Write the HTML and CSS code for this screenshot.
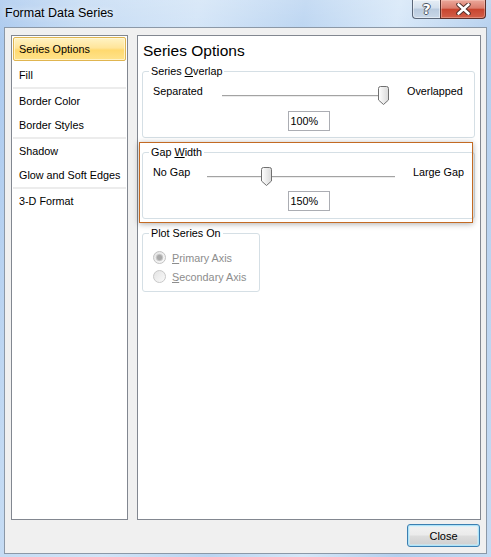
FILE: index.html
```html
<!DOCTYPE html>
<html lang="en">
<head>
<meta charset="utf-8">
<title>Format Data Series</title>
<link rel="stylesheet" href="styles.css">
</head>
<body>
<div class="window">
  <header class="titlebar">
    <span class="title">Format Data Series</span>
    <div class="caption-buttons">
      <div class="cap-btn cap-help"><span class="cap-glyph">?</span></div>
      <div class="cap-btn cap-close">
        <svg width="15" height="12" viewBox="0 0 15 12">
          <path d="M2.5 1.5 L12.5 10.5 M12.5 1.5 L2.5 10.5" stroke="#4a2a26" stroke-width="4.4" stroke-linecap="round" fill="none"/>
          <path d="M2.5 1.5 L12.5 10.5 M12.5 1.5 L2.5 10.5" stroke="#ffffff" stroke-width="2.6" stroke-linecap="round" fill="none"/>
        </svg>
      </div>
    </div>
  </header>

  <div class="client">
    <div class="panes">
      <ul class="nav">
        <li class="nav-item selected">Series Options</li>
        <li class="nav-sep blank"></li>
        <li class="nav-item">Fill</li>
        <li class="nav-sep"></li>
        <li class="nav-item">Border Color</li>
        <li class="nav-item">Border Styles</li>
        <li class="nav-sep"></li>
        <li class="nav-item">Shadow</li>
        <li class="nav-item">Glow and Soft Edges</li>
        <li class="nav-sep"></li>
        <li class="nav-item">3-D Format</li>
      </ul>

      <section class="page">
        <h1 class="page-title">Series Options</h1>

        <fieldset class="group overlap">
          <legend>Series <u>O</u>verlap</legend>
          <div class="slider-row">
            <span class="lbl lbl-start">Separated</span>
            <div class="slider">
              <svg class="thumb" style="left:156px" width="11" height="19" viewBox="0 0 11 19">
                <defs><linearGradient id="thumbA" x1="0" x2="1"><stop offset="0" stop-color="#ffffff"/><stop offset="1" stop-color="#d9d9d9"/></linearGradient></defs>
                <path d="M0.5 2.5 Q0.5 0.5 2.5 0.5 H8.5 Q10.5 0.5 10.5 2.5 V14 L5.5 18.5 L0.5 14 Z" fill="url(#thumbA)" stroke="#707070"/>
              </svg>
            </div>
            <span class="lbl lbl-end">Overlapped</span>
          </div>
          <div class="value-box">100%</div>
        </fieldset>

        <div class="highlight">
          <fieldset class="group gap">
            <legend>Gap <u>W</u>idth</legend>
            <div class="slider-row">
              <span class="lbl lbl-start">No Gap</span>
              <div class="slider">
                <svg class="thumb" style="left:54px" width="11" height="19" viewBox="0 0 11 19">
                  <defs><linearGradient id="thumbB" x1="0" x2="1"><stop offset="0" stop-color="#ffffff"/><stop offset="1" stop-color="#d9d9d9"/></linearGradient></defs>
                  <path d="M0.5 2.5 Q0.5 0.5 2.5 0.5 H8.5 Q10.5 0.5 10.5 2.5 V14 L5.5 18.5 L0.5 14 Z" fill="url(#thumbB)" stroke="#707070"/>
                </svg>
              </div>
              <span class="lbl lbl-end">Large Gap</span>
            </div>
            <div class="value-box">150%</div>
          </fieldset>
        </div>

        <fieldset class="group plot">
          <legend>Plot Series On</legend>
          <div class="radio-row">
            <svg class="radio" width="13" height="13" viewBox="0 0 13 13">
              <defs><linearGradient id="radA" x1="0" y1="0" x2="1" y2="1"><stop offset="0" stop-color="#e2e2e2"/><stop offset="1" stop-color="#fbfbfb"/></linearGradient></defs>
              <circle cx="6.5" cy="6.5" r="6" fill="url(#radA)" stroke="#c2c2c2"/>
              <circle cx="6.5" cy="6.5" r="3.2" fill="#a9a9a9" stroke="#c9c9c9"/>
            </svg>
            <span class="radio-label"><u>P</u>rimary Axis</span>
          </div>
          <div class="radio-row">
            <svg class="radio" width="13" height="13" viewBox="0 0 13 13">
              <defs><linearGradient id="radB" x1="0" y1="0" x2="1" y2="1"><stop offset="0" stop-color="#e2e2e2"/><stop offset="1" stop-color="#fbfbfb"/></linearGradient></defs>
              <circle cx="6.5" cy="6.5" r="6" fill="url(#radB)" stroke="#c8c8c8"/>
            </svg>
            <span class="radio-label"><u>S</u>econdary Axis</span>
          </div>
        </fieldset>
      </section>
    </div>

    <div class="button-row">
      <button class="btn default" type="button">Close</button>
    </div>
  </div>
</div>
</body>
</html>
```

FILE: styles.css
```css
* {
  box-sizing: border-box;
}

html,
body {
  margin: 0;
  padding: 0;
}

body {
  width: 491px;
  height: 557px;
  overflow: hidden;
  font-family: "Liberation Sans", Arial, sans-serif;
  font-size: 10.8px;
  color: #000;
  background:
    linear-gradient(180deg, rgba(255, 255, 255, 0.18) 0%, rgba(255, 255, 255, 0) 40px),
    linear-gradient(100deg, #a9c8ee 0%, #c3daf3 14%, #d2e4f7 34%, #bad4f1 52%, #d6e7f8 68%, #b4cfee 84%, #c5dbf3 100%);
}

.window {
  display: flex;
  flex-direction: column;
  height: 557px;
}

/* ---- title bar ---- */
.titlebar {
  height: 27px;
  display: flex;
  justify-content: space-between;
  align-items: flex-start;
  padding: 0 5px 0 5px;
}

.title {
  font-size: 12.5px;
  line-height: 26px;
  color: #000;
  text-shadow: 0 0 6px rgba(255, 255, 255, 0.9);
}

.caption-buttons {
  display: flex;
  height: 19px;
}

.cap-btn {
  height: 19px;
  display: flex;
  align-items: center;
  justify-content: center;
  border: 1px solid #5b6779;
  border-top: none;
}

.cap-help {
  width: 28px;
  border-right: none;
  border-radius: 0 0 0 4px;
  background: linear-gradient(180deg, #e6eef6 0%, #d3dfec 45%, #b9cade 50%, #c9d8e8 100%);
  box-shadow: inset 0 0 0 1px rgba(255, 255, 255, 0.45);
}

.cap-glyph {
  font-family: "DejaVu Sans", sans-serif;
  font-weight: bold;
  font-size: 14px;
  line-height: 17px;
  color: #fff;
  text-shadow: 1px 0 0 #4b5563, -1px 0 0 #4b5563, 0 1px 0 #4b5563, 0 -1px 0 #4b5563;
}

.cap-close {
  width: 46px;
  border-color: #5c2f2a;
  border-radius: 0 0 4px 0;
  background: linear-gradient(180deg, #eba89b 0%, #db7d6d 45%, #c8452f 52%, #d2604a 100%);
  box-shadow: inset 0 0 0 1px rgba(255, 220, 210, 0.35);
}

/* ---- client area ---- */
.client {
  flex: 1;
  margin: 0 4px 3px 4px;
  border: 1px solid #8b98a7;
  background: #f0f0f0;
  padding: 7px 5px 6px 6px;
  display: flex;
  flex-direction: column;
}

.panes {
  display: flex;
  gap: 9px;
  height: 485px;
}

/* ---- category list ---- */
.nav {
  width: 117px;
  margin: 0;
  padding: 1px 1px 0 1px;
  list-style: none;
  background: #fff;
  border: 1px solid #828790;
}

.nav-item {
  height: 24px;
  line-height: 22px;
  padding-left: 5px;
  border: 1px solid transparent;
  border-radius: 2px;
  white-space: nowrap;
}

.nav-item.selected {
  border-color: #e0b550;
  background: linear-gradient(180deg, #fff3c4 0%, #ffe59a 45%, #ffd96f 55%, #ffe38c 100%);
  box-shadow: inset 0 0 0 1px rgba(255, 250, 225, 0.7);
}

.nav-sep {
  height: 2px;
  background: #ececec;
}

.nav-sep.blank {
  background: transparent;
}

/* ---- options page ---- */
.page {
  flex: 1;
  background: #fff;
  border: 1px solid #828790;
  padding: 5px 5px 0 4px;
}

.page-title {
  margin: 0 0 0 1px;
  font-size: 15.5px;
  font-weight: normal;
  line-height: 20px;
}

.group {
  margin: 3px 0 0 0;
  padding: 0 0 6px 0;
  border: 1px solid #d5dfe5;
  border-radius: 3px;
  min-width: 0;
}

.group legend {
  margin-left: 6px;
  padding: 0 2px;
  line-height: 14px;
}

.slider-row {
  display: flex;
  height: 21px;
  margin-top: 6px;
  padding-left: 10px;
}

.lbl {
  line-height: 14px;
  white-space: nowrap;
}

.slider {
  position: relative;
  height: 21px;
}

.slider::before {
  content: "";
  position: absolute;
  left: 0;
  right: 0;
  top: 11px;
  height: 1px;
  background: #a3a3a3;
  box-shadow: 0 1px 0 #ececec;
}

.thumb {
  position: absolute;
  top: 2px;
  display: block;
}

.overlap .lbl-start { width: 69px; }
.overlap .slider { width: 165px; }
.overlap .lbl-end { margin-left: 20px; }

.gap .lbl-start { width: 54px; }
.gap .slider { width: 188px; }
.gap .lbl-end { margin-left: 18px; }

.value-box {
  width: 42px;
  height: 20px;
  margin: 6px auto 0;
  border: 1px solid #abadb3;
  padding-left: 2px;
  line-height: 18px;
}

.gap .value-box {
  margin-top: 5px;
}

.gap {
  margin-top: 0;
  padding-bottom: 7px;
}

/* focus highlight around the active group */
.highlight {
  position: relative;
  margin-top: 7px;
}

.highlight::after {
  content: "";
  position: absolute;
  top: -3px;
  left: -3px;
  right: 2px;
  bottom: -4px;
  border: 1px solid #c36a23;
  box-shadow: 0 1px 6px rgba(0, 0, 0, 0.32);
  pointer-events: none;
}

.plot {
  width: 118px;
  margin-top: 7px;
  padding-bottom: 5px;
}

.radio-row {
  display: flex;
  align-items: center;
  height: 19px;
  padding-left: 10px;
}

.radio-row:first-of-type {
  margin-top: 8px;
}

.radio {
  display: block;
  margin-right: 6px;
}

.radio-label {
  color: #8d8d8d;
  white-space: nowrap;
}

/* ---- bottom buttons ---- */
.button-row {
  display: flex;
  justify-content: flex-end;
  margin-top: 4px;
  padding-right: 1px;
}

.btn {
  width: 73px;
  height: 23px;
  padding: 0;
  font-family: "Liberation Sans", Arial, sans-serif;
  font-size: 11px;
  color: #000;
  border: 1px solid #3c7fb1;
  border-radius: 3px;
  background: linear-gradient(180deg, #f2f2f2 0%, #ebebeb 48%, #dddddd 52%, #cfcfcf 100%);
}

.btn.default {
  box-shadow: inset 0 0 0 1px #aee3f8, inset 0 0 0 2px rgba(200, 240, 255, 0.5);
}
```
